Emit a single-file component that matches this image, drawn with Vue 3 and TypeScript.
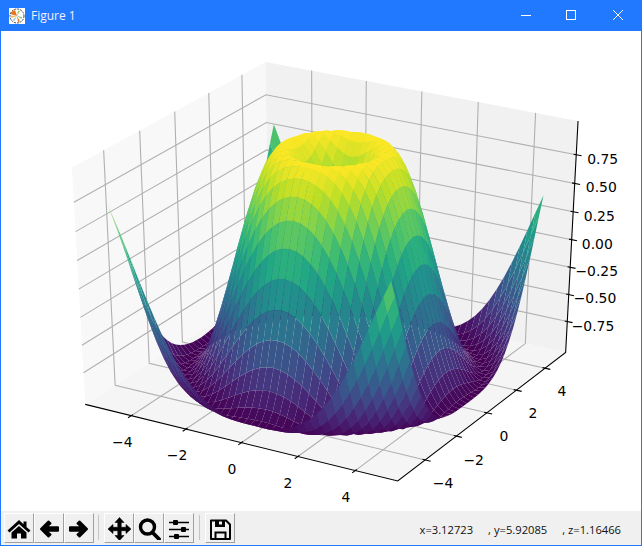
<script setup lang="ts">
type P3 = [number, number, number];
const SX = 3463, TX = 329.3, SY = 2594, TY = 264;
const n: P3 = [0.4330127, -0.75, 0.5];
const u: P3 = [0.8660254, 0.5, 0];
const v: P3 = [-0.25, 0.4330127, 0.8660254];
const dot = (a: P3, b: P3) => a[0] * b[0] + a[1] * b[1] + a[2] * b[2];

function proj(p: P3): { x: number; y: number; z: number } {
  const q: P3 = [p[0] - 0.5, p[1] - 0.5, p[2] - 0.5];
  const depth = 10 - dot(n, q);
  return { x: TX + (SX * dot(u, q)) / depth, y: TY - (SY * dot(v, q)) / depth, z: -10 / depth };
}

const grid: number[] = [];
for (let i = 0; i < 40; i++) grid.push(-5 + i * 0.25);
const Z: number[][] = grid.map((x) => grid.map((y) => Math.sin(Math.sqrt(x * x + y * y))));
const flat = Z.flat();
const zMin = Math.min(...flat);
const zMax = Math.max(...flat);
const xLo = -5 - 9.75 * 0.05;
const xRange = 9.75 * 1.1;
const ux = (x: number) => (x - xLo) / xRange;
const uz = (z: number) => (z - zMin) / (zMax - zMin);

const stops = [
  [68, 1, 84], [72, 36, 117], [65, 68, 135], [53, 95, 141], [42, 120, 142], [33, 145, 140],
  [34, 168, 132], [68, 191, 112], [122, 209, 81], [189, 223, 38], [253, 231, 37],
];
function viridis(t: number): string {
  const s = Math.max(0, Math.min(0.99999, t)) * 10;
  const i = Math.floor(s);
  const f = s - i;
  const c = stops[i].map((a, k) => Math.round(a + (stops[i + 1][k] - a) * f));
  return `rgb(${c[0]},${c[1]},${c[2]})`;
}

interface Quad { points: string; fill: string; depth: number }
const raw: { pts: ReturnType<typeof proj>[]; avg: number }[] = [];
for (let i = 0; i < 39; i++) {
  for (let j = 0; j < 39; j++) {
    const corners: [number, number][] = [[i, j], [i + 1, j], [i + 1, j + 1], [i, j + 1]];
    raw.push({
      pts: corners.map(([a, b]) => proj([ux(grid[a]), ux(grid[b]), uz(Z[a][b])])),
      avg: corners.reduce((acc, [a, b]) => acc + Z[a][b], 0) / 4,
    });
  }
}
const aMin = Math.min(...raw.map((r) => r.avg));
const aMax = Math.max(...raw.map((r) => r.avg));
const quads: Quad[] = raw
  .map((r) => ({
    points: r.pts.map((p) => `${p.x.toFixed(2)},${p.y.toFixed(2)}`).join(" "),
    fill: viridis((r.avg - aMin) / (aMax - aMin)),
    depth: r.pts.reduce((acc, p) => acc + p.z, 0) / 4,
  }))
  .sort((a, b) => b.depth - a.depth);

const lo = -1 / 48;
const hi = 49 / 48;
const poly = (pts: P3[]) => pts.map((p) => { const q = proj(p); return `${q.x.toFixed(2)},${q.y.toFixed(2)}`; }).join(" ");
const panes = [
  { cls: "pane-x", points: poly([[lo, lo, lo], [lo, hi, lo], [lo, hi, hi], [lo, lo, hi]]) },
  { cls: "pane-y", points: poly([[lo, hi, lo], [hi, hi, lo], [hi, hi, hi], [lo, hi, hi]]) },
  { cls: "pane-z", points: poly([[lo, lo, lo], [hi, lo, lo], [hi, hi, lo], [lo, hi, lo]]) },
];

const xyTicks = [-4, -2, 0, 2, 4];
const zTicks = [-0.75, -0.5, -0.25, 0, 0.25, 0.5, 0.75];
const gridLines: string[] = [];
for (const t of xyTicks) {
  const a = ux(t);
  gridLines.push(poly([[a, lo, lo], [a, hi, lo], [a, hi, hi]]));
  gridLines.push(poly([[hi, a, lo], [lo, a, lo], [lo, a, hi]]));
}
for (const t of zTicks) {
  const a = uz(t);
  gridLines.push(poly([[lo, lo, a], [lo, hi, a], [hi, hi, a]]));
}
const axes = [poly([[lo, lo, lo], [hi, lo, lo], [hi, hi, lo], [hi, hi, hi]])];
const td = (hi - lo) / 12;
const ticks: string[] = [];
for (const t of xyTicks) {
  const a = ux(t);
  ticks.push(poly([[a, lo - 0.2 * td, lo], [a, lo + 0.1 * td, lo]]));
  ticks.push(poly([[hi + 0.2 * td, a, lo], [hi - 0.1 * td, a, lo]]));
}
for (const t of zTicks) {
  const a = uz(t);
  ticks.push(poly([[hi + 0.2 * td, hi, a], [hi - 0.1 * td, hi, a]]));
}

const labels = [
  { t: "−4", x: 122.3, y: 442.3 }, { t: "−2", x: 177, y: 455.3 }, { t: "0", x: 232, y: 469.3 },
  { t: "2", x: 288, y: 483.3 }, { t: "4", x: 346, y: 497.3 },
  { t: "−4", x: 443, y: 483 }, { t: "−2", x: 473.7, y: 459.7 }, { t: "0", x: 504, y: 436 },
  { t: "2", x: 533, y: 413.3 }, { t: "4", x: 562, y: 390.7 },
  { t: "0.75", x: 602.7, y: 159.3 }, { t: "0.50", x: 601.3, y: 187 }, { t: "0.25", x: 599.3, y: 215.7 },
  { t: "0.00", x: 597.3, y: 244 }, { t: "−0.25", x: 596.7, y: 271 }, { t: "−0.50", x: 595, y: 298 },
  { t: "−0.75", x: 593, y: 326 },
];
</script>

<template>
  <div class="window">
    <header class="titlebar">
      <svg class="app-icon" viewBox="0 0 16 16" width="16" height="16">
        <rect width="16" height="16" fill="#fff" />
        <circle cx="8" cy="8" r="7" fill="#fff" stroke="#444" stroke-width="1" stroke-dasharray="2 1" />
        <path d="M8 8 L1.5 6 L3 3.5 L6 2 Z" fill="#e8731c" />
        <path d="M8 8 L2.5 10 L2 7.5 Z" fill="#f2b84a" />
        <path d="M8 8 L9 2.5 L11 3 Z" fill="#9cc96b" />
        <path d="M8 8 L13 9 L12.5 11 Z" fill="#8fc27a" />
        <path d="M8 8 L11 13.5 L9 14 Z" fill="#e8731c" />
        <path d="M8 8 L5 13 L4 12 Z" fill="#77b0d8" />
      </svg>
      <span class="title">Figure 1</span>
      <div class="controls">
        <svg width="46" height="31" viewBox="0 0 46 31"><path d="M18 15.5H28" stroke="#fff" fill="none" /></svg>
        <svg width="46" height="31" viewBox="0 0 46 31"><rect x="17.5" y="10.5" width="9" height="9" stroke="#fff" fill="none" /></svg>
        <svg width="46" height="31" viewBox="0 0 46 31"><path d="M18 10L28 20M28 10L18 20" stroke="#fff" fill="none" /></svg>
      </div>
    </header>

    <main class="canvas">
      <svg class="plot" width="640" height="480" viewBox="1 31 640 480">
        <polygon v-for="p in panes" :key="p.cls" :class="p.cls" :points="p.points" />
        <polyline v-for="(g, i) in gridLines" :key="'g' + i" class="gridline" :points="g" />
        <polyline v-for="(a, i) in axes" :key="'a' + i" class="axis" :points="a" />
        <polyline v-for="(t, i) in ticks" :key="'t' + i" class="axis" :points="t" />
        <polygon v-for="(q, i) in quads" :key="'q' + i" :points="q.points" :fill="q.fill" />
        <text v-for="(l, i) in labels" :key="'l' + i" class="ticklabel" :x="l.x" :y="l.y + 5">{{ l.t }}</text>
      </svg>
    </main>

    <footer class="toolbar">
      <button class="tool" title="Home">
        <svg viewBox="0 0 24 24" width="24" height="24">
          <path d="M12 4 L0.5 14.5 L2.5 16.5 L12 8 L21.5 16.5 L23.5 14.5 L19.5 11 V5.5 H16.5 V8.2 Z" />
          <path d="M4.5 16.5 L12 10 L19.5 16.5 V22.5 H14 V17.5 H10 V22.5 H4.5 Z" />
        </svg>
      </button>
      <button class="tool" title="Back">
        <svg viewBox="0 0 24 24" width="24" height="24">
          <path d="M11.5 5.5 L4 13 L11.5 20.5 L13.5 18.5 L9 14.8 H21 V11.2 H9 L13.5 7.5 Z" stroke="#000" stroke-width="2" stroke-linejoin="round" />
        </svg>
      </button>
      <button class="tool" title="Forward">
        <svg viewBox="0 0 24 24" width="24" height="24">
          <path d="M12.5 5.5 L20 13 L12.5 20.5 L10.5 18.5 L15 14.8 H3 V11.2 H15 L10.5 7.5 Z" stroke="#000" stroke-width="2" stroke-linejoin="round" />
        </svg>
      </button>
      <span class="sep"></span>
      <button class="tool" title="Pan">
        <svg viewBox="0 0 24 24" width="24" height="24">
          <path d="M12.5 1.5 L17 6.5 H14.2 V11.3 H19 V8.5 L24 13 L19 17.5 V14.7 H14.2 V19.5 H17 L12.5 24.5 L8 19.5 H10.8 V14.7 H6 V17.5 L1 13 L6 8.5 V11.3 H10.8 V6.5 H8 Z" stroke="#000" stroke-width="0.6" stroke-linejoin="round" />
        </svg>
      </button>
      <button class="tool" title="Zoom">
        <svg viewBox="0 0 24 24" width="24" height="24">
          <circle cx="10.5" cy="11" r="7" fill="none" stroke="#000" stroke-width="3.4" />
          <path d="M15.5 16.5 L22 23" stroke="#000" stroke-width="3.8" stroke-linecap="round" />
        </svg>
      </button>
      <button class="tool" title="Configure">
        <svg viewBox="0 0 24 24" width="24" height="24">
          <path d="M2 6.5H22M2 13.5H22M2 20.5H22" stroke="#000" stroke-width="1.5" />
          <rect x="6" y="4" width="5" height="5" rx="1" />
          <rect x="14" y="11" width="5" height="5" rx="1" />
          <rect x="7" y="18" width="5" height="5" rx="1" />
        </svg>
      </button>
      <span class="sep sep-wide"></span>
      <button class="tool" title="Save">
        <svg viewBox="0 0 24 24" width="24" height="24">
          <path d="M3 4.5 H18 L22 8.5 V23 H3 Z" fill="none" stroke="#000" stroke-width="2" stroke-linejoin="round" />
          <path d="M7 4 V11 H17 V4 H14 V8.5 H11 V4 Z" />
          <path d="M6.5 23 V15.5 H18.5 V23 H16.5 V17.5 H8.5 V23 Z" />
        </svg>
      </button>
      <div class="status">
        <span>x=3.12723</span>
        <span>, y=5.92085</span>
        <span>, z=1.16466</span>
      </div>
    </footer>
  </div>
</template>

<style scoped>
.window {
  width: 642px;
  height: 546px;
  box-sizing: border-box;
  display: flex;
  flex-direction: column;
  border: 1px solid #2079ff;
  border-top: 0;
  background: #fff;
  overflow: hidden;
}
.titlebar {
  height: 31px;
  flex: none;
  margin: 0 -1px;
  background: #2079ff;
  display: flex;
  align-items: center;
  color: #fff;
}
.app-icon {
  margin-left: 9px;
}
.title {
  margin-left: 6px;
  font: 12px "Open Sans", "Noto Sans", sans-serif;
  color: #f4f0ff;
}
.controls {
  margin-left: auto;
  display: flex;
  padding-right: 1px;
}
.controls svg {
  display: block;
}
.canvas {
  height: 480px;
  flex: none;
}
.plot {
  display: block;
}
.pane-x { fill: #f8f8f8; }
.pane-y { fill: #f1f1f1; }
.pane-z { fill: #f5f5f5; }
.gridline {
  fill: none;
  stroke: #b0b0b0;
  stroke-width: 1.1;
}
.axis {
  fill: none;
  stroke: #000;
  stroke-width: 1.1;
}
.ticklabel {
  font: 13.9px "DejaVu Sans", sans-serif;
  text-anchor: middle;
  fill: #000;
}
.toolbar {
  flex: 1;
  background: #f0f0f0;
  display: flex;
  align-items: flex-start;
  padding: 2px 0 0 3px;
  box-sizing: border-box;
}
.tool {
  width: 30px;
  height: 30px;
  box-sizing: border-box;
  padding: 0;
  margin: 0;
  background: #f0f0f0;
  border: 1px solid;
  border-color: #fff #a0a0a0 #a0a0a0 #fff;
  border-radius: 0;
  display: flex;
  align-items: center;
  justify-content: center;
}
.tool svg {
  display: block;
}
.sep {
  width: 1px;
  height: 25px;
  margin: 2px 5px 0 4px;
  background: #c4c4c4;
}
.sep-wide {
  margin-left: 5px;
}
.status {
  margin-left: auto;
  padding: 9px 20px 0 0;
  display: flex;
  gap: 15px;
  font: 11.2px "Open Sans", "Noto Sans", sans-serif;
  color: #111;
  white-space: pre;
}
</style>
